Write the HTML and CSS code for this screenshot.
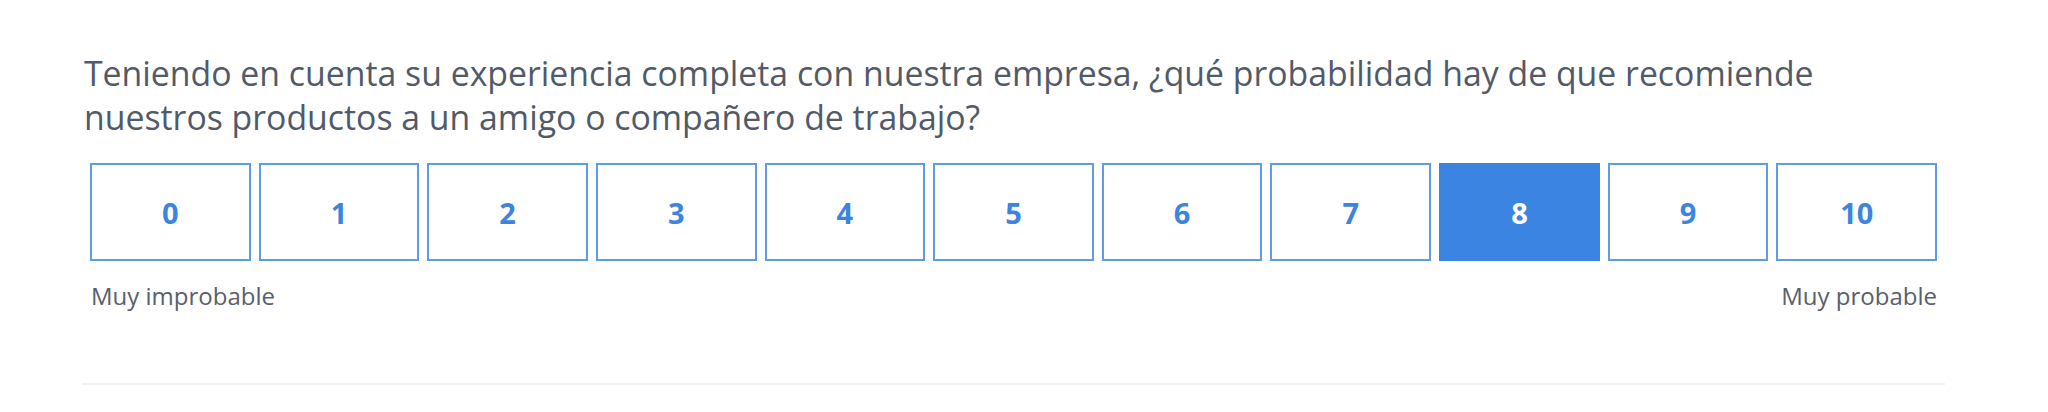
FILE: index.html
```html
<!DOCTYPE html>
<html lang="es">
<head>
<meta charset="utf-8">
<title>Encuesta NPS</title>
<link rel="stylesheet" href="styles.css">
</head>
<body>
<section class="survey">
  <h2 class="question">Teniendo en cuenta su experiencia completa con nuestra empresa, ¿qué probabilidad hay de que recomiende<br>nuestros productos a un amigo o compañero de trabajo?</h2>
  <div class="scale">
    <button class="opt">0</button>
    <button class="opt">1</button>
    <button class="opt">2</button>
    <button class="opt">3</button>
    <button class="opt">4</button>
    <button class="opt">5</button>
    <button class="opt">6</button>
    <button class="opt">7</button>
    <button class="opt opt-selected">8</button>
    <button class="opt">9</button>
    <button class="opt">10</button>
  </div>
  <div class="labels">
    <span>Muy improbable</span>
    <span>Muy probable</span>
  </div>
  <div class="divider"></div>
</section>
</body>
</html>
```

FILE: styles.css
```css
html, body {
  margin: 0;
  padding: 0;
  background: #ffffff;
}

body {
  font-family: "Open Sans", "Noto Sans", "Liberation Sans", sans-serif;
}

.survey {
  width: 1863px;
  padding: 51px 0 0 82px;
}

.question {
  margin: 0 0 24px 2px;
  font-size: 33.8px;
  line-height: 44px;
  font-weight: 400;
  color: #515a68;
}

.scale {
  display: flex;
  gap: 8px;
  padding: 0 8px;
}

.opt {
  flex: 1;
  height: 98px;
  margin: 0;
  padding: 0;
  border: 2px solid #5e9be9;
  background: #ffffff;
  color: #3b84e0;
  font-family: inherit;
  font-size: 29px;
  font-weight: 700;
  cursor: pointer;
}

.opt-selected {
  background: #3b84e2;
  border-color: #3b84e2;
  color: #ffffff;
}

.labels {
  display: flex;
  justify-content: space-between;
  padding: 0 8px 0 9px;
  margin-top: 20px;
  font-size: 24px;
  line-height: 30px;
  color: #58606d;
}

.divider {
  margin-top: 72px;
  height: 2px;
  background: #f1f1f2;
}
```
